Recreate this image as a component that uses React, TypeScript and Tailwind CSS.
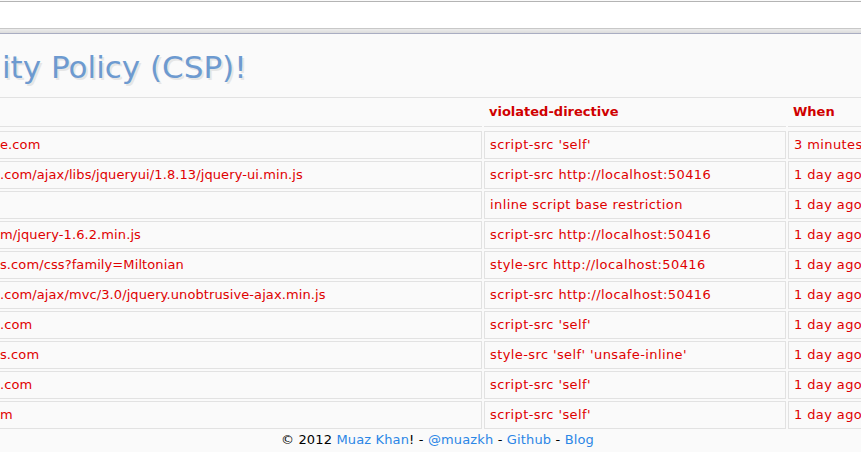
const rows: [string, string, string][] = [
  ['e.com', "script-src 'self'", '3 minutes ago'],
  ['.com/ajax/libs/jqueryui/1.8.13/jquery-ui.min.js', 'script-src http://localhost:50416', '1 day ago'],
  ['', 'inline script base restriction', '1 day ago'],
  ['m/jquery-1.6.2.min.js', 'script-src http://localhost:50416', '1 day ago'],
  ['s.com/css?family=Miltonian', 'style-src http://localhost:50416', '1 day ago'],
  ['.com/ajax/mvc/3.0/jquery.unobtrusive-ajax.min.js', 'script-src http://localhost:50416', '1 day ago'],
  ['.com', "script-src 'self'", '1 day ago'],
  ['s.com', "style-src 'self' 'unsafe-inline'", '1 day ago'],
  ['.com', "script-src 'self'", '1 day ago'],
  ['m', "script-src 'self'", '1 day ago'],
]

const font = { fontFamily: '"DejaVu Sans", Verdana, sans-serif' }

export default function App() {
  return (
    <div className="w-[861px] h-[452px] overflow-hidden bg-[#fafafa] text-[13px]" style={font}>
      {/* top bar */}
      <div className="h-[27px] bg-white border-t border-[#b4b4b4] mt-px" />
      <div className="h-[6px] border-t border-[#c8c8c8] border-b border-b-[#a9adc2] bg-gradient-to-b from-[#ececec] to-[#dcdcdc]" />

      {/* title */}
      <div className="h-[64px] border-b border-[#e2e2e2] flex items-center pl-[2px] pt-[3px]">
        <h1
          className="text-[31px] leading-none text-[#6d9ad0] whitespace-nowrap"
          style={{ textShadow: '2px 2px 0 #e6e6e6' }}
        >
          ity Policy (CSP)!
        </h1>
      </div>

      {/* header */}
      <div className="flex gap-[2px] h-[29px] mb-[4px] font-bold text-[#d00000]">
        <div className="w-[482px] shrink-0 border-b border-[#e2e2e2]" />
        <div className="w-[302px] shrink-0 border-b border-[#e2e2e2] flex items-center pl-[5px]">violated-directive</div>
        <div className="flex-1 border-b border-[#e2e2e2] flex items-center pl-[5px] whitespace-nowrap">When</div>
      </div>

      {/* body */}
      <div className="flex flex-col gap-[2px] text-[#e00000]">
        {rows.map((r, i) => (
          <div key={i} className="flex gap-[2px] h-[28px]">
            <div className="w-[482px] shrink-0 border border-l-0 border-[#e2e2e2] flex items-center whitespace-nowrap overflow-hidden tracking-[0.1px]">{r[0]}</div>
            <div className="w-[302px] shrink-0 border border-[#e2e2e2] flex items-center pl-[5px] whitespace-nowrap tracking-[0.4px]">{r[1]}</div>
            <div className="flex-1 border border-r-0 border-[#e2e2e2] flex items-center pl-[5px] whitespace-nowrap overflow-hidden tracking-[0.4px]">{r[2]}</div>
          </div>
        ))}
      </div>

      {/* footer */}
      <div className="pl-[281px] pt-[1px] whitespace-nowrap text-black tracking-[0.15px]">
        © 2012 <a className="text-[#2b86e6]">Muaz Khan</a>! - <a className="text-[#2b86e6]">@muazkh</a> -{' '}
        <a className="text-[#2b86e6]">Github</a> - <a className="text-[#2b86e6]">Blog</a>
      </div>
    </div>
  )
}
